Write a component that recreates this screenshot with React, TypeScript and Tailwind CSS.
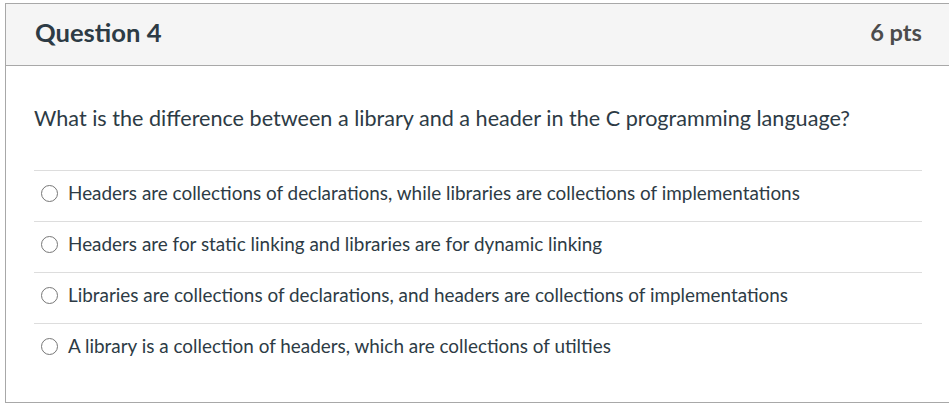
import React from "react";

const answers = [
  "Headers are collections of declarations, while libraries are collections of implementations",
  "Headers are for static linking and libraries are for dynamic linking",
  "Libraries are collections of declarations, and headers are collections of implementations",
  "A library is a collection of headers, which are collections of utilties",
];

export default function App() {
  return (
    <div className="w-[949px] h-[411px] overflow-hidden bg-white" style={{ fontFamily: "Lato, 'Open Sans', sans-serif" }}>
      <div className="ml-[5px] mt-[3px] w-[960px] h-[400px] border-l border-t border-b border-[#a8a8a8]">
        <div className="h-[62px] bg-[#f5f5f5] border-b border-[#a8a8a8] flex items-center justify-between pl-[29px] pr-[43px] pb-[4px]">
          <div className="text-[25.6px] font-bold text-[#2d3b45]">Question 4</div>
          <div className="text-[23.6px] font-bold text-[#4c4c4c]">6 pts</div>
        </div>
        <div className="pl-[28px] pr-[43px]">
          <div className="pt-[36px] h-[104px] text-[21.6px] text-[#2d3b45]">
            What is the difference between a library and a header in the C programming language?
          </div>
          {answers.map((a) => (
            <div key={a} className="h-[51px] border-t border-[#dddddd] flex items-center pb-[6px]">
              <span className="ml-[7px] w-[17px] h-[17px] rounded-full border border-[#777] bg-white shrink-0" />
              <span className="ml-[10px] text-[18.9px] text-[#2d3b45]">{a}</span>
            </div>
          ))}
        </div>
      </div>
    </div>
  );
}
